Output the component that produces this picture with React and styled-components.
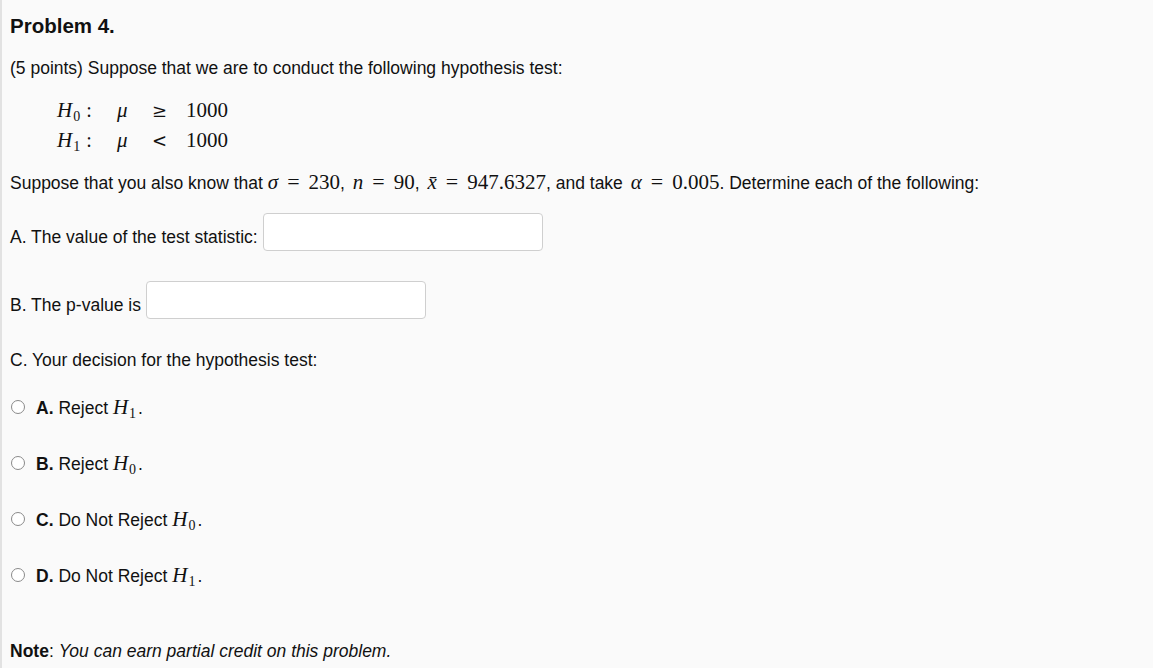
import React, { useState } from "react";
import styled, { createGlobalStyle } from "styled-components";

const GlobalStyle = createGlobalStyle`
  html, body {
    margin: 0;
    padding: 0;
    background: #fafafa;
  }
  body {
    font-family: "Liberation Sans", Arial, sans-serif;
    font-size: 17.5px;
    color: #111;
  }
`;

// small math pieces (TeX-ish look with Liberation Serif)
const Var = ({ children, gap }) => <MathItalic $gap={gap}>{children}</MathItalic>;

const Hyp = ({ n }) => (
  <MathItalic>
    H<Sub>{n}</Sub>
  </MathItalic>
);

const App = () => {
  const [stat, setStat] = useState("");
  const [pval, setPval] = useState("");
  const [choice, setChoice] = useState(null);

  const options = [
    { key: "A", text: "Reject", h: 1 },
    { key: "B", text: "Reject", h: 0 },
    { key: "C", text: "Do Not Reject", h: 0 },
    { key: "D", text: "Do Not Reject", h: 1 },
  ];

  return (
    <Page>
      <GlobalStyle />
      <Title>Problem 4.</Title>
      <Para>(5 points) Suppose that we are to conduct the following hypothesis test:</Para>

      <HypTable>
        <HypRow>
          <HypName>
            <Hyp n="0" />
            <Colon>:</Colon>
          </HypName>
          <Var>μ</Var>
          <Rel>≥</Rel>
          <MathNum>1000</MathNum>
        </HypRow>
        <HypRow>
          <HypName>
            <Hyp n="1" />
            <Colon>:</Colon>
          </HypName>
          <Var>μ</Var>
          <Rel>&lt;</Rel>
          <MathNum>1000</MathNum>
        </HypRow>
      </HypTable>

      <GivenLine>
        Suppose that you also know that <Var>σ</Var>
        <Eq>=</Eq>
        <MathNum>230</MathNum>, <Var gap={3}>n</Var>
        <Eq>=</Eq>
        <MathNum>90</MathNum>, <Var gap={3}>x̄</Var>
        <Eq>=</Eq>
        <MathNum>947.6327</MathNum>, and take <Var gap={3}>α</Var>
        <Eq>=</Eq>
        <MathNum>0.005</MathNum>. Determine each of the following:
      </GivenLine>

      <AnswerRow $top={19}>
        <AnswerLabel>A. The value of the test statistic:</AnswerLabel>
        <AnswerInput value={stat} onChange={(e) => setStat(e.target.value)} />
      </AnswerRow>

      <AnswerRow $top={30}>
        <AnswerLabel>B. The p-value is</AnswerLabel>
        <AnswerInput value={pval} onChange={(e) => setPval(e.target.value)} />
      </AnswerRow>

      <Para $top={31}>C. Your decision for the hypothesis test:</Para>

      <Options>
        {options.map((o) => (
          <Option key={o.key}>
            <Radio
              type="radio"
              name="decision"
              checked={choice === o.key}
              onChange={() => setChoice(o.key)}
            />
            <span>
              <b>{o.key}.</b> {o.text} <Hyp n={o.h} />
              <Dot>.</Dot>
            </span>
          </Option>
        ))}
      </Options>

      <Note>
        <b>Note</b>: <i>You can earn partial credit on this problem.</i>
      </Note>
    </Page>
  );
};

export default App;

const Page = styled.div`
  min-height: 668px;
  box-sizing: border-box;
  border-left: 2px solid #e2e2e2;
  padding: 14px 0 0 8px;
`;

const Title = styled.div`
  font-size: 20.5px;
  font-weight: bold;
  line-height: 24px;
`;

const Para = styled.div`
  margin-top: ${(p) => p.$top ?? 20}px;
  line-height: 20px;
`;

const HypTable = styled.div`
  display: flex;
  flex-direction: column;
  margin-top: 17px;
  padding-left: 47px;
`;

const HypRow = styled.div`
  display: grid;
  grid-template-columns: 60px 35px 34px auto;
  align-items: baseline;
  height: 30px;
  line-height: 30px;
`;

const HypName = styled.span`
  white-space: nowrap;
`;

const MathItalic = styled.span`
  font-family: "Liberation Serif", "Times New Roman", serif;
  font-style: italic;
  font-size: 21px;
  margin-left: ${(p) => p.$gap ?? 0}px;
`;

const Sub = styled.sub`
  font-style: normal;
  font-size: 14px;
  vertical-align: -4px;
  line-height: 0;
  margin-left: 1px;
`;

const Colon = styled.span`
  font-family: "Liberation Serif", serif;
  font-style: normal;
  font-size: 20px;
  margin-left: 6px;
`;

const Rel = styled.span`
  font-family: "DejaVu Serif", "Liberation Serif", serif;
  font-size: 18px;
`;

const MathNum = styled.span`
  font-family: "Liberation Serif", "Times New Roman", serif;
  font-size: 21px;
`;

const Eq = styled.span`
  font-family: "Liberation Serif", serif;
  font-size: 22px;
  margin: 0 9px;
`;

const GivenLine = styled.div`
  margin-top: 16px;
  line-height: 22px;
`;

const AnswerRow = styled.div`
  display: flex;
  align-items: flex-end;
  gap: 5px;
  margin-top: ${(p) => p.$top}px;
`;

const AnswerLabel = styled.span`
  line-height: 20px;
  padding-bottom: 4px;
`;

const AnswerInput = styled.input`
  box-sizing: border-box;
  width: 280px;
  height: 38px;
  border: 1px solid #cfcfcf;
  border-radius: 4px;
  background: #fff;
  font-family: inherit;
  font-size: 16px;
  padding: 4px 8px;
  outline: none;
`;

const Options = styled.div`
  display: flex;
  flex-direction: column;
  gap: 32px;
  margin-top: 25px;
`;

const Option = styled.label`
  display: flex;
  align-items: center;
  gap: 11px;
  height: 24px;
  line-height: 24px;
  cursor: pointer;
`;

const Radio = styled.input`
  appearance: none;
  margin: 0 0 0 1px;
  width: 14px;
  height: 14px;
  border: 1px solid #8a8a8a;
  border-radius: 50%;
  background: #fff;
  cursor: pointer;

  &:checked {
    background: radial-gradient(circle, #1a73e8 0 3px, #fff 3.5px);
    border-color: #1a73e8;
  }
`;

const Dot = styled.span`
  margin-left: 2px;
`;

const Note = styled.div`
  margin-top: 54px;
  line-height: 20px;
  padding-bottom: 10px;
`;
